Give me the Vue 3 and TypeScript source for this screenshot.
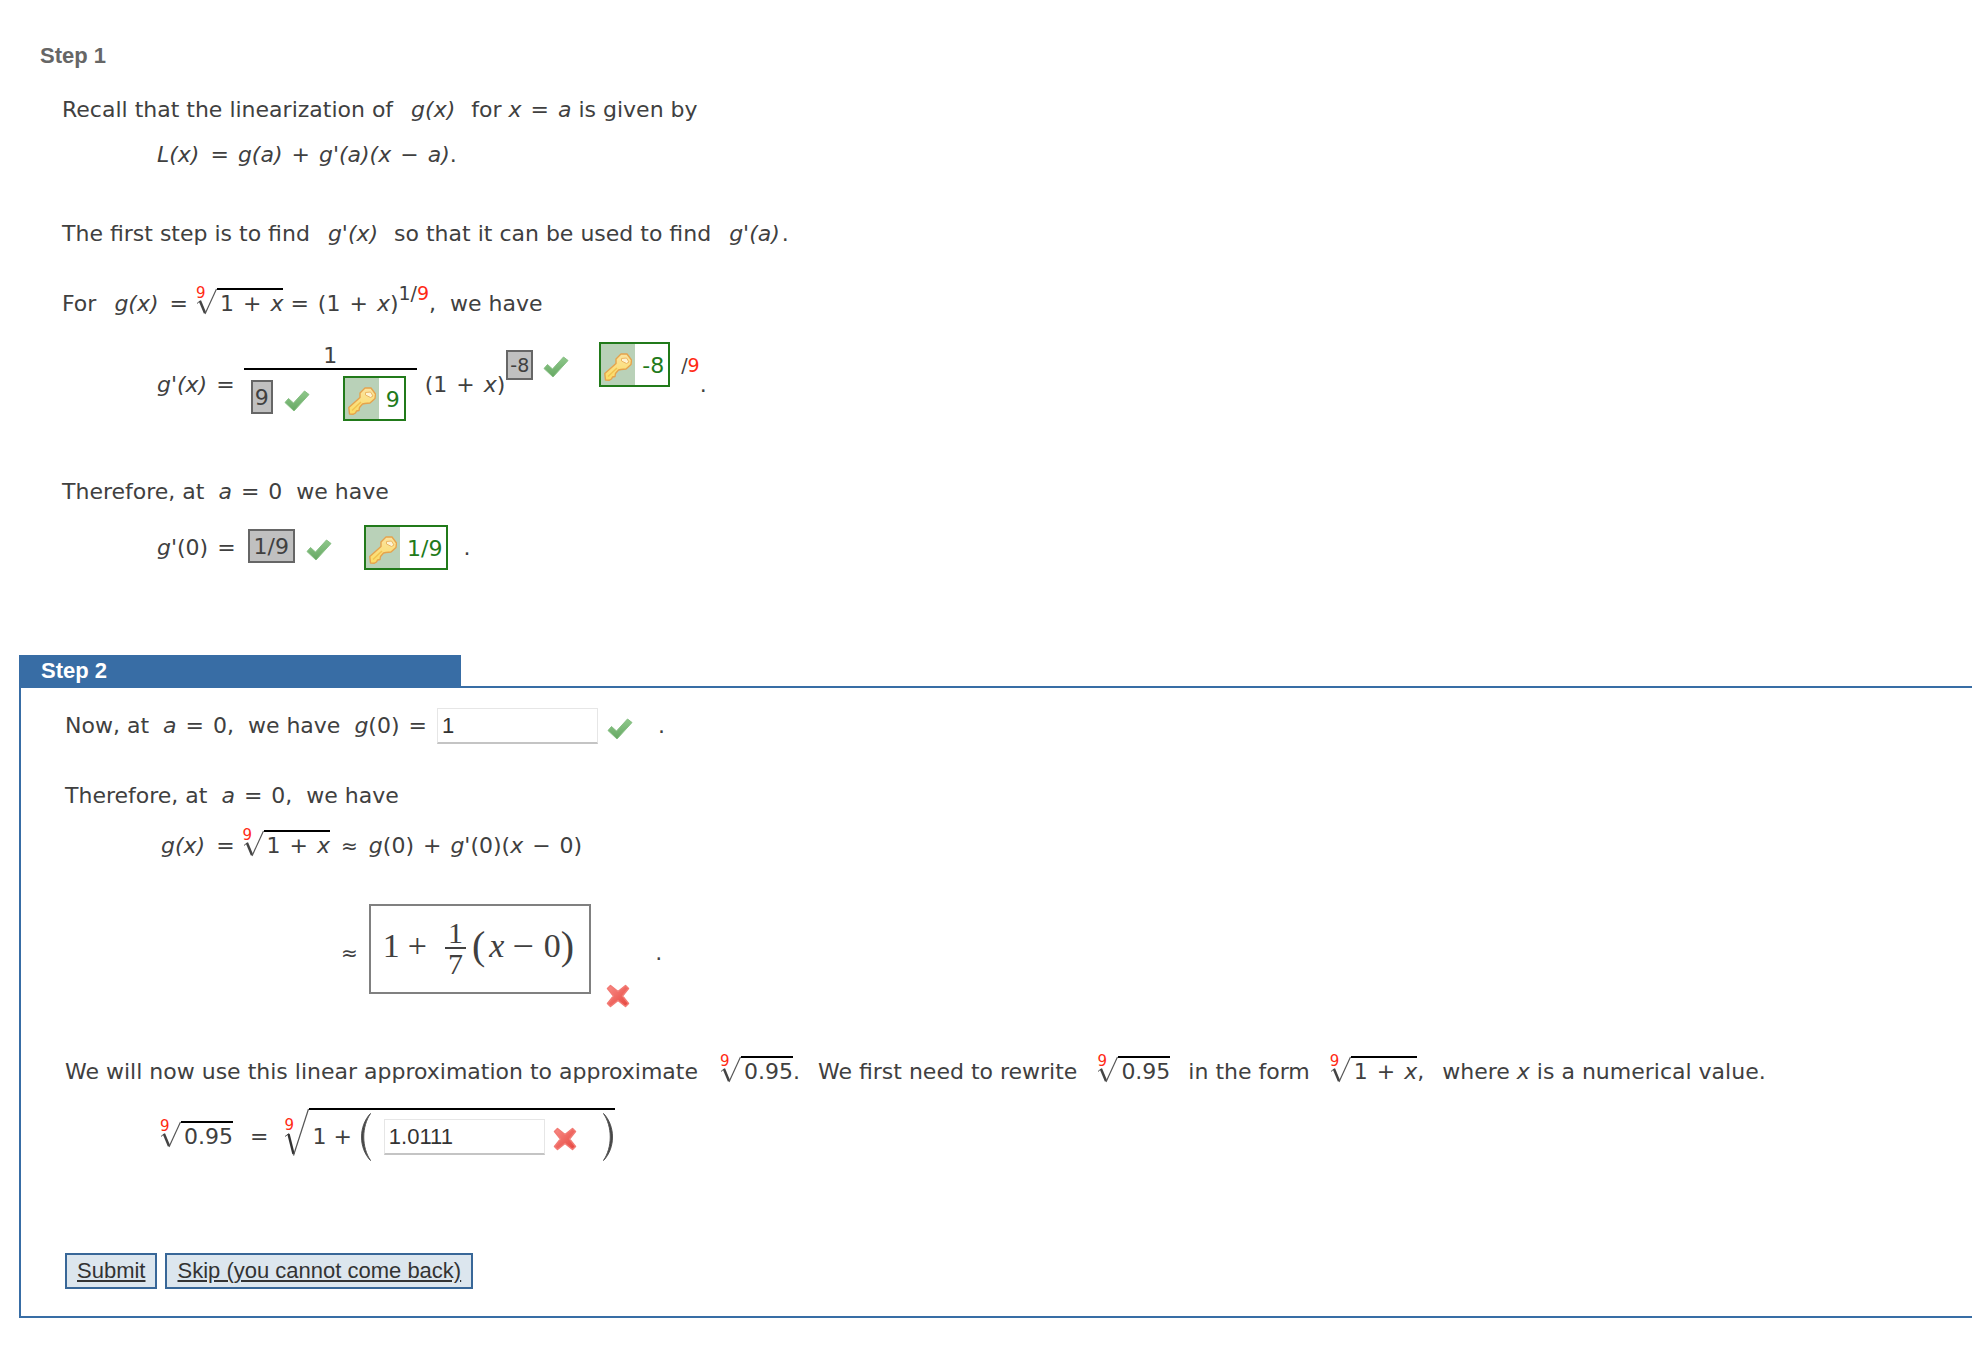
<script setup lang="ts">
import { ref } from 'vue'

const valueAtZero = ref<string>('1')
const radicandTerm = ref<string>('1.0111')
</script>

<template>
  <main class="page">
    <svg class="sprite" aria-hidden="true">
      <defs>
        <linearGradient id="green" x1="0" y1="0" x2="0" y2="1">
          <stop offset="0" stop-color="#8fc88b" />
          <stop offset="1" stop-color="#66a863" />
        </linearGradient>
        <linearGradient id="red" x1="0" y1="0" x2="1" y2="1">
          <stop offset="0" stop-color="#f98c86" />
          <stop offset="1" stop-color="#e5443d" />
        </linearGradient>
        <linearGradient id="gold" x1="0" y1="0" x2="0" y2="1">
          <stop offset="0" stop-color="#fbe3a0" />
          <stop offset="1" stop-color="#fbdc62" />
        </linearGradient>
      </defs>
      <symbol id="check" viewBox="0 0 26 22">
        <path d="M1 12.500 4.500 8.500 9.500 13 20.500 1 25 4.500 10 21Z" fill="url(#green)" stroke="#86bf83" stroke-width="1" stroke-linejoin="round" />
      </symbol>
      <symbol id="cross" viewBox="0 0 24 24">
        <path d="M4.500 1.500 12 7.500 19.500 1.500 22.500 4.500 16.500 12 22.500 19.500 19.500 22.500 12 16.500 4.500 22.500 1.500 19.500 7.500 12 1.500 4.500Z" fill="url(#red)" stroke="#f27a74" stroke-width="1.500" stroke-linejoin="round" />
      </symbol>
      <symbol id="key" viewBox="0 0 28 28">
        <path d="M12 6 17 1 23 1 27.500 7 27 11.500 22 16 17 16.500 14.500 17 11.500 20.500 11 23.500 8.500 24 7.500 26 5 27.300 1.500 27 .8 20.500 12 10.500Z" fill="url(#gold)" stroke="#e5a34c" stroke-width="1.400" stroke-linejoin="round" />
        <path d="M17.500 5.500 22.500 5 25 9 22.500 10.500 17.500 8Z" fill="#fdf3d4" stroke="#ecb661" stroke-width="1" />
        <path d="M4 23.500 13 15" stroke="#f2c24e" stroke-width="1.500" fill="none" />
      </symbol>
      <symbol id="radical" viewBox="0 0 20 27">
        <path d="M0 15.500 3.500 12.500" stroke="#555" stroke-width="1" fill="none" />
        <path d="M3 13 8 25" stroke="#444" stroke-width="2.500" fill="none" />
        <path d="M8 26 19.500 1" stroke="#555" stroke-width="1.200" fill="none" />
      </symbol>
      <symbol id="radical-tall" viewBox="0 0 24 48">
        <path d="M0 28.500 4 25.500" stroke="#555" stroke-width="1" fill="none" />
        <path d="M3.500 26 8.500 46" stroke="#333" stroke-width="2.500" fill="none" />
        <path d="M8.500 47.500 23.500 1" stroke="#555" stroke-width="1.200" fill="none" />
      </symbol>
      <symbol id="paren" viewBox="0 0 12 48">
        <path d="M10.500 .5C-1.500 13-1.500 35 10.500 47.500 1.500 34 1.500 14 10.500 .5Z" fill="#444" stroke="#555" stroke-width="1" />
      </symbol>
    </svg>

    <section class="step-one">
      <h2 class="heading">Step 1</h2>
      <p class="line intro">Recall that the linearization of&nbsp; <i class="fn">g(x)</i>&nbsp; for <i>x</i> <span class="op">=</span> <i>a</i> is given by</p>
      <p class="line indent linearization"><i class="lead">L(x)</i> <span class="op">=</span> <i>g(a)</i> <span class="op">+</span> <i>g'(a)(x</i> <span class="op">−</span> <i>a)</i>.</p>
      <p class="line first-step">The first step is to find&nbsp; <i class="fn">g'(x)</i>&nbsp; so that it can be used to find&nbsp; <i class="fn">g'(a)</i>.</p>
      <p class="line function">For&nbsp; <i class="fn">g(x)</i> <span class="op">=</span>&#32;<span class="root"><span class="index">9</span><svg class="radical"><use href="#radical" /></svg><span class="radicand">1 <span class="op">+</span> <i>x</i></span></span>
        <span class="op after-root">=</span> (1 <span class="op">+</span> <i>x</i>)<span class="exponent">1/<span class="given">9</span></span>,&nbsp; we have</p>

      <div class="derivative indent">
        <span><i>g'(x)</i> <span class="op">=</span></span>
        <span class="fraction">
          <span class="numerator">1</span>
          <span class="denominator">
            <span class="answer">9</span>
            <svg class="check" role="img" aria-label="Correct"><use href="#check" /></svg>
            <span class="solution"><span class="key-cell"><svg class="key"><use href="#key" /></svg></span><span class="solution-text">9</span></span>
          </span>
        </span>
        <span>(1 <span class="op">+</span> <i>x</i>)</span>
        <span class="power">
          <span class="answer small">-8</span>
          <svg class="check" role="img" aria-label="Correct"><use href="#check" /></svg>
          <span class="solution"><span class="key-cell"><svg class="key"><use href="#key" /></svg></span><span class="solution-text">-8</span></span>
          <span class="over">/<span class="given">9</span></span>
        </span>
        <span>.</span>
      </div>

      <p class="line therefore">Therefore, at&nbsp; <i>a</i> <span class="op">=</span> 0&nbsp; we have</p>
      <div class="at-zero indent">
        <span><i>g'</i>(0) <span class="op">=</span></span>
        <span class="answer">1/9</span>
        <svg class="check" role="img" aria-label="Correct"><use href="#check" /></svg>
        <span class="solution"><span class="key-cell"><svg class="key"><use href="#key" /></svg></span><span class="solution-text">1/9</span></span>
        <span class="stop">.</span>
      </div>
    </section>

    <section class="step-two">
      <h2 class="heading tab">Step 2</h2>
      <form class="panel" @submit.prevent>
        <div class="entry">
          <label for="value-at-zero">Now, at&nbsp; <i>a</i> <span class="op">=</span> 0,&nbsp; we have&nbsp; <i>g</i>(0) <span class="op">=</span></label>
          <input id="value-at-zero" v-model="valueAtZero" class="field" type="text" />
          <svg class="check" role="img" aria-label="Correct"><use href="#check" /></svg>
          <span class="stop">.</span>
        </div>

        <p class="line second-therefore">Therefore, at&nbsp; <i>a</i> <span class="op">=</span> 0,&nbsp; we have</p>
        <p class="line indent approximation"><i class="lead">g(x)</i> <span class="op">=</span>&#32;<span class="root"><span class="index">9</span><svg class="radical"><use href="#radical" /></svg><span class="radicand">1 <span class="op">+</span> <i>x</i></span></span>
          <span class="approx">≈</span> <i>g</i>(0) <span class="op">+</span> <i>g'</i>(0)(<i>x</i> <span class="op">−</span> 0)</p>

        <div class="estimate">
          <span class="approx">≈</span>
          <span class="math-box">
            <span>1</span><span class="plus">+</span>
            <span class="math-fraction"><span class="math-top">1</span><span class="math-bottom">7</span></span>
            <span class="math-paren">(</span><i class="math-variable">x</i><span class="minus">−</span><span>0</span><span class="math-paren">)</span>
          </span>
          <svg class="cross" role="img" aria-label="Incorrect"><use href="#cross" /></svg>
          <span class="stop">.</span>
        </div>

        <p class="line rewrite">We will now use this linear approximation to approximate&nbsp;
          <span class="root"><span class="index">9</span><svg class="radical"><use href="#radical" /></svg><span class="radicand">0.95</span></span>.&nbsp; <span class="clause">We first need to rewrite&nbsp;</span>
          <span class="root spaced"><span class="index">9</span><svg class="radical"><use href="#radical" /></svg><span class="radicand">0.95</span></span>&nbsp; <span class="clause">in the form&nbsp;</span>
          <span class="root spaced"><span class="index">9</span><svg class="radical"><use href="#radical" /></svg><span class="radicand">1 <span class="op">+</span> <i>x</i></span></span>,&nbsp; <span class="clause">where <i>x</i> is a numerical value.</span></p>

        <div class="final indent">
          <span class="root"><span class="index">9</span><svg class="radical"><use href="#radical" /></svg><span class="radicand">0.95</span></span>
          <span>=</span>
          <span class="root tall"><span class="index">9</span><svg class="radical"><use href="#radical-tall" /></svg><span class="radicand">
            <label for="radicand-term">1 +</label>
            <svg class="paren"><use href="#paren" /></svg>
            <input id="radicand-term" v-model="radicandTerm" class="field" type="text" />
            <svg class="cross" role="img" aria-label="Incorrect"><use href="#cross" /></svg>
            <svg class="paren close"><use href="#paren" /></svg>
          </span></span>
        </div>

        <div class="actions">
          <button class="action" type="submit">Submit</button>
          <button class="action" type="button">Skip (you cannot come back)</button>
        </div>
      </form>
    </section>
  </main>
</template>

<style>
body {
  margin: 0;
  background: #fff;
}
</style>

<style scoped>
.page {
  padding: 42px 0 30px;
  color: #404040;
  font: 22px/28px Verdana, "DejaVu Sans", sans-serif;
}
.sprite {
  position: absolute;
  width: 0;
  height: 0;
}
.line,
.heading {
  margin: 0;
}
.heading {
  font: bold 22px/28px "Liberation Sans", Arial, sans-serif;
}
.step-one {
  padding-left: 62px;
}
.step-one .heading {
  margin-left: -22px;
  color: #666;
}
.indent {
  margin-left: 95px;
}
.intro {
  margin-top: 26px;
}
.linearization {
  margin-top: 17px;
}
.first-step {
  margin-top: 51px;
}
.function {
  margin-top: 35px;
}
.op {
  margin: 0 2px;
}
.op.after-root {
  margin-left: 7px;
}
.fn {
  margin: 0 2px 0 4px;
}
.lead {
  margin-right: 2px;
}
.given,
.index {
  color: #ff2a14;
}
.exponent {
  font-size: 19px;
  line-height: 20px;
  vertical-align: 11px;
}

/* Radicals */
.root {
  position: relative;
  display: inline-flex;
}
.index {
  position: absolute;
  top: -5px;
  left: -1px;
  font-size: 15px;
  line-height: 20px;
}
.radical {
  flex: none;
  width: 20px;
  height: 27px;
}
.radicand {
  align-self: baseline;
  padding-left: 3px;
  border-top: 2px solid #000;
}
.tall .radical {
  width: 24px;
  height: 48px;
}
.tall .index {
  top: 7px;
}
.tall .radicand {
  display: flex;
  align-items: center;
  padding-top: 3px;
}
.paren {
  width: 12px;
  height: 48px;
  margin: 0 12px 0 8px;
}
.paren.close {
  margin: 0 1px 0 25px;
  transform: scaleX(-1);
}
.tall .cross {
  margin: 4px 0 0 8px;
}

/* Answer marks */
.answer {
  flex: none;
  padding: 2px 2px 0;
  border: 2px solid #666;
  background: #c0c0c0;
}
.answer.small {
  padding: 0 2px;
  font-size: 19px;
  line-height: 26px;
}
.check {
  flex: none;
  width: 26px;
  height: 22px;
}
.cross {
  flex: none;
  width: 24px;
  height: 24px;
}
.solution {
  display: inline-flex;
  flex: none;
  border: 2px solid #217a1a;
  color: #217a1a;
}
.key-cell {
  display: flex;
  align-items: center;
  padding: 4px 3px 0;
  background: #b9d1b8;
}
.key {
  width: 28px;
  height: 28px;
}
.solution-text {
  padding: 8px 4px 5px 7px;
}

.derivative {
  display: flex;
  align-items: flex-end;
  margin-top: 24px;
  padding-bottom: 21px;
}
.fraction {
  display: flex;
  flex-direction: column;
  margin: 0 8px -22px 7px;
}
.numerator {
  text-align: center;
  border-bottom: 2px solid #000;
  line-height: 24px;
}
.denominator {
  display: flex;
  align-items: center;
  padding: 6px 11px 0 7px;
}
.denominator .answer,
.at-zero .answer {
  margin-bottom: 4px;
}
.denominator .check {
  margin: 5px 33px 0 11px;
}
.power {
  display: flex;
  align-items: center;
  margin: 0 0 12px 1px;
}
.power .check {
  margin: 5px 30px 0 10px;
}
.power .over {
  margin-left: 11px;
  font-size: 19px;
}
.therefore {
  margin-top: 58px;
}
.at-zero,
.entry {
  display: flex;
  align-items: center;
}
.at-zero {
  margin-top: 19px;
}
.at-zero .answer {
  margin-left: 10px;
  padding: 2px 4px 0;
}
.at-zero .check {
  margin: 5px 32px 0 11px;
}
.at-zero .stop {
  margin-left: 15px;
}

/* Step 2 */
.step-two {
  margin: 85px 0 0 19px;
}
.tab {
  width: 420px;
  padding: 2px 0 1px 22px;
  background: #386da5;
  color: #fff;
}
.panel {
  padding: 20px 0 27px 44px;
  border: 2px solid #386da5;
  border-right: 0;
}
.entry .field {
  margin-left: 8px;
}
.entry .check {
  margin: 6px 25px 0 9px;
}
.field {
  box-sizing: border-box;
  width: 161px;
  height: 36px;
  padding: 0 4px;
  border: 1px solid #e6e6e6;
  border-bottom: 2px solid #c4c4c4;
  background: #fff;
  color: #333;
  font: 22px "Liberation Sans", Arial, sans-serif;
}
.second-therefore {
  margin-top: 38px;
}
.approximation {
  margin-top: 20px;
}
.approx {
  font-size: 20px;
}
.approximation .approx {
  margin: 0 4px 0 11px;
}
.estimate {
  display: flex;
  align-items: center;
  margin: 44px 0 0 276px;
}
.estimate .approx,
.estimate .stop {
  padding-top: 8px;
}
.math-box {
  display: flex;
  align-items: center;
  box-sizing: border-box;
  height: 90px;
  margin: 0 15px 0 11px;
  padding: 0 15px 6px 12px;
  border: 2px solid #808080;
  font: 34px/40px "Liberation Serif", "Times New Roman", serif;
}
.plus {
  margin: 0 18px 0 8px;
}
.minus {
  margin: 0 10px 0 8px;
  font-size: 38px;
}
.math-fraction {
  display: flex;
  flex-direction: column;
  margin-right: 6px;
  padding-top: 4px;
  font-size: 30px;
  line-height: 29px;
  text-align: center;
}
.math-top {
  padding: 0 3px;
  border-bottom: 2px solid #404040;
}
.math-paren {
  font-size: 40px;
}
.math-variable {
  margin-left: 4px;
}
.estimate .cross {
  align-self: flex-end;
  margin: 0 25px -14px 0;
}
.rewrite {
  margin-top: 62px;
}
.rewrite .root {
  margin-left: 9px;
}
.rewrite .root.spaced {
  margin-left: 14px;
}
.clause {
  margin-left: 4px;
}
.final {
  display: flex;
  align-items: baseline;
  gap: 17px;
  margin-top: 22px;
}
.actions {
  display: flex;
  gap: 8px;
  margin-top: 92px;
}
.action {
  padding: 2px 10px;
  border: 2px solid #386798;
  border-radius: 0;
  background: #dce6ee;
  color: #333;
  font: 22px/28px "Liberation Sans", Arial, sans-serif;
  text-decoration: underline;
  cursor: pointer;
}
.panel .indent {
  margin-left: 96px;
}
</style>
